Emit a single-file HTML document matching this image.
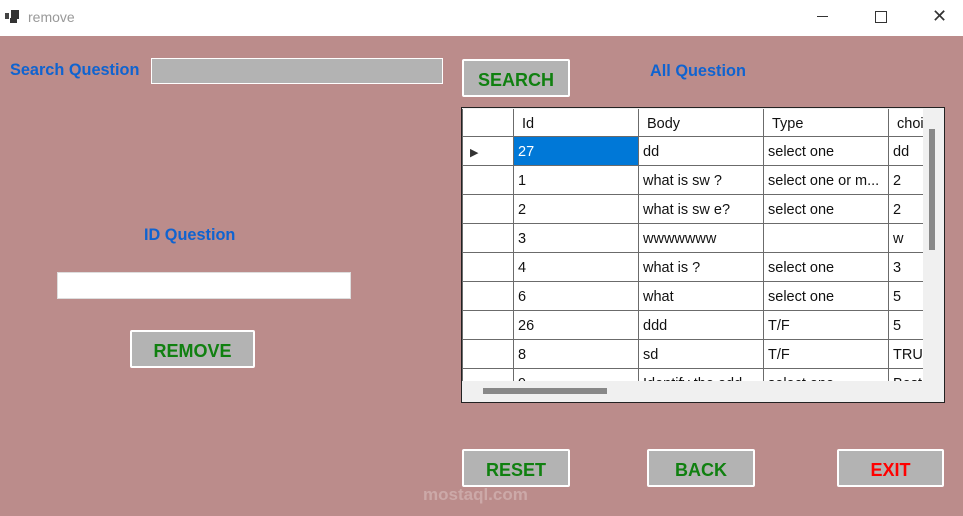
<!DOCTYPE html>
<html><head><style>
body{margin:0;width:963px;height:516px;position:relative;overflow:hidden;background:#bb8c8b;font-family:"Liberation Sans",sans-serif}
.t{position:absolute;left:0;top:0;width:963px;height:36px;background:#fff}
.a{position:absolute}
.lbl{position:absolute;color:#0f63d0;font-weight:bold;font-size:16.3px}
.btn{position:absolute;background:#b3b3b3;border:2px solid #fff;border-radius:2px;box-sizing:border-box;font-weight:bold;font-size:18px;color:#108010;text-align:center;line-height:38px}
.grid{position:absolute;left:461px;top:107px;width:484px;height:296px;border:1px solid #222;box-sizing:border-box;background:#f0f0f0;overflow:hidden}
table{border-collapse:collapse;position:absolute;left:0px;top:1px;font-size:14.5px;color:#111;background:#fff;table-layout:fixed}
td{border:1px solid #6b6b6b;height:29px;padding:3px 0 0 4px;box-sizing:border-box;white-space:nowrap;overflow:hidden}
tr:first-child td{height:27px;border-top:none;padding-left:8px}
</style></head><body>
<div class="t">
<svg class="a" style="left:5px;top:10px" width="16" height="14"><rect x="0" y="3" width="4" height="6" fill="#444"/><rect x="6" y="0" width="8" height="9" fill="#333"/><rect x="5" y="8" width="7" height="5" fill="#333"/></svg>
<div class="a" style="left:28px;top:9px;font-size:14px;color:#999">remove</div>
<div class="a" style="left:817px;top:16px;width:11px;height:1px;background:#333"></div>
<div class="a" style="left:875px;top:11px;width:10px;height:10px;border:1px solid #333"></div>
<div class="a" style="left:932px;top:6px;font-size:18px;color:#333">✕</div>
</div>
<div class="lbl" style="left:10px;top:61px">Search Question</div>
<div class="a" style="left:151px;top:58px;width:292px;height:26px;background:#b3b3b3;border:1px solid #fff;box-sizing:border-box"></div>
<div class="btn" style="left:462px;top:59px;width:108px;height:38px">SEARCH</div>
<div class="lbl" style="left:650px;top:62px">All Question</div>
<div class="lbl" style="left:144px;top:226px">ID Question</div>
<div class="a" style="left:57px;top:272px;width:294px;height:27px;background:#fff;border:1px solid #ddd;box-sizing:border-box"></div>
<div class="btn" style="left:130px;top:330px;width:125px;height:38px">REMOVE</div>
<div class="grid">
<table>
<colgroup><col style="width:51px"><col style="width:125px"><col style="width:125px"><col style="width:125px"><col style="width:40px"></colgroup>
<tr><td></td><td>Id</td><td>Body</td><td>Type</td><td>choi</td></tr>
<tr><td style="font-size:11px;color:#333">&nbsp;▶</td><td style="background:#0078d7;color:#fff">27</td><td>dd</td><td>select one</td><td>dd</td></tr>
<tr><td></td><td>1</td><td>what is sw ?</td><td>select one or m...</td><td>2</td></tr>
<tr><td></td><td>2</td><td>what is sw e?</td><td>select one</td><td>2</td></tr>
<tr><td></td><td>3</td><td>wwwwwww</td><td></td><td>w</td></tr>
<tr><td></td><td>4</td><td>what is ?</td><td>select one</td><td>3</td></tr>
<tr><td></td><td>6</td><td>what</td><td>select one</td><td>5</td></tr>
<tr><td></td><td>26</td><td>ddd</td><td>T/F</td><td>5</td></tr>
<tr><td></td><td>8</td><td>sd</td><td>T/F</td><td>TRUE</td></tr>
<tr><td></td><td>9</td><td>Identify the odd</td><td>select one</td><td>Best</td></tr>
</table>
<div class="a" style="left:461px;top:0;width:22px;height:294px;background:#f0f0f0"></div>
<div class="a" style="left:467px;top:21px;width:6px;height:121px;background:#888"></div>
<div class="a" style="left:0;top:273px;width:482px;height:22px;background:#f0f0f0"></div>
<div class="a" style="left:21px;top:280px;width:124px;height:6px;background:#888"></div>
</div>
<div class="a" style="left:423px;top:485px;font-size:17px;font-weight:bold;color:rgba(255,255,255,.25)">mostaql.com</div>
<div class="btn" style="left:462px;top:449px;width:108px;height:38px">RESET</div>
<div class="btn" style="left:647px;top:449px;width:108px;height:38px">BACK</div>
<div class="btn" style="left:837px;top:449px;width:107px;height:38px;color:#f00">EXIT</div>
</body></html>
